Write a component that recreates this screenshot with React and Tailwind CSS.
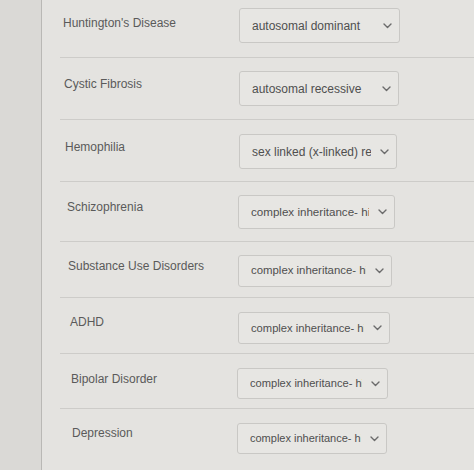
import React from 'react';

const rows = [
  { label: "Huntington's Disease", value: 'autosomal dominant', row: 'pt-[8px] pb-[14px]', lbl: 'pl-[3px] pt-[6px]', box: 'h-[35px] w-[161px] ml-0 text-[12px]' },
  { label: 'Cystic Fibrosis', value: 'autosomal recessive', row: 'pt-[13px] pb-[13px]', lbl: 'pl-[4px] pt-[4px]', box: 'h-[35px] w-[160px] ml-0 text-[12px]' },
  { label: 'Hemophilia', value: 'sex linked (x-linked) recessive', row: 'pt-[14px] pb-[12px]', lbl: 'pl-[5px] pt-[4px]', box: 'h-[35px] w-[158px] ml-0 text-[12px]' },
  { label: 'Schizophrenia', value: 'complex inheritance- high heritability', row: 'pt-[13px] pb-[12px]', lbl: 'pl-[7px] pt-[3px]', box: 'h-[34px] w-[157px] -ml-[1px] text-[11.6px]' },
  { label: 'Substance Use Disorders', value: 'complex inheritance- high heritability', row: 'pt-[13px] pb-[10px]', lbl: 'pl-[8px] pt-[2px]', box: 'h-[32px] w-[154px] -ml-[1px] text-[11.4px]' },
  { label: 'ADHD', value: 'complex inheritance- high heritability', row: 'pt-[14px] pb-[9px]', lbl: 'pl-[10px] pt-[1px]', box: 'h-[32px] w-[152px] -ml-[1px] text-[11.2px]' },
  { label: 'Bipolar Disorder', value: 'complex inheritance- high heritability', row: 'pt-[14px] pb-[9px]', lbl: 'pl-[11px] pt-[2px]', box: 'h-[31px] w-[151px] -ml-[2px] text-[11.1px]' },
  { label: 'Depression', value: 'complex inheritance- high heritability', row: 'pt-[14px] pb-[16px]', lbl: 'pl-[12px] pt-[1px]', box: 'h-[31px] w-[150px] -ml-[2px] text-[11px]' },
];

const Chevron = () => (
  <svg width="9" height="6" viewBox="0 0 9 6" fill="none" className="shrink-0">
    <path d="M1 1l3.5 3.5L8 1" stroke="#6b6b6b" strokeWidth="1.4" strokeLinecap="round" strokeLinejoin="round" />
  </svg>
);

export default function App() {
  return (
    <div
      className="flex h-[470px] w-[474px] overflow-hidden bg-[#e4e3e0] text-[12px]"
      style={{ fontFamily: '"Liberation Sans", Arial, sans-serif' }}
    >
      {/* left margin strip */}
      <div className="w-[42px] shrink-0 border-r border-[#b9b8b5] bg-[#dad9d6]" />

      <div className="flex-1 pl-[18px]">
        {rows.map((r, i) => (
          <div
            key={r.label}
            className={`flex items-start ${i < rows.length - 1 ? 'border-b border-[#cdccc9]' : ''} ${r.row}`}
          >
            <div className={`w-[179px] shrink-0 text-[#5a5a5a] ${r.lbl}`}>{r.label}</div>
            <div
              className={`flex items-center rounded-[3px] border border-[#c9c8c5] bg-[#e7e6e3] pl-[12px] pr-[7px] text-[#4f4f4f] ${r.box}`}
            >
              <span className="flex-1 overflow-hidden whitespace-nowrap">{r.value}</span>
              <span className="ml-[9px]">
                <Chevron />
              </span>
            </div>
          </div>
        ))}
      </div>
    </div>
  );
}
